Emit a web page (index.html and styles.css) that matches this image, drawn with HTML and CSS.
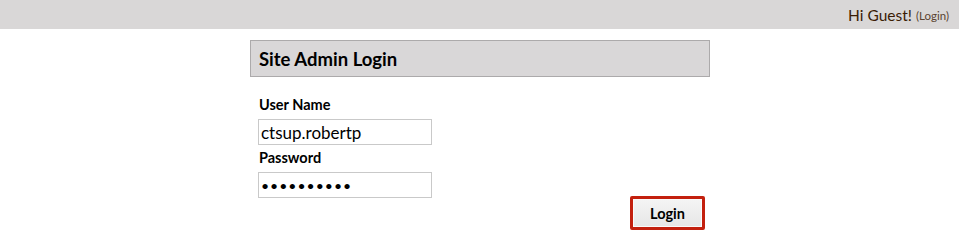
FILE: index.html
```html
<!DOCTYPE html>
<html>
<head>
<meta charset="utf-8">
<link rel="stylesheet" href="styles.css">
</head>
<body>
<div class="topbar">
  <span class="greet">Hi Guest!</span>
  <a class="login-link" href="#">(Login)</a>
</div>
<div class="panel">
  <div class="panel-head">Site Admin Login</div>
  <form class="form">
    <label class="label">User Name</label>
    <input class="field" type="text" value="ctsup.robertp">
    <label class="label">Password</label>
    <input class="field pw" type="password" value="abcdefghij">
    <div class="actions"><button class="btn" type="button">Login</button></div>
  </form>
</div>
</body>
</html>
```

FILE: styles.css
```css
html, body {
  margin: 0;
  padding: 0;
  background: #ffffff;
  font-family: Lato, "Open Sans", "Liberation Sans", sans-serif;
  color: #000;
}
.topbar {
  height: 29px;
  background: #d9d7d7;
  display: flex;
  justify-content: flex-end;
  align-items: center;
  gap: 4px;
  padding-right: 10px;
}
.greet {
  font-size: 15.5px;
  color: #3b1c05;
}
.login-link {
  font-size: 11.5px;
  color: #5a4330;
  text-decoration: none;
  margin-top: 2px;
}
.panel {
  width: 460px;
  margin: 11px 0 0 250px;
}
.panel-head {
  box-sizing: border-box;
  height: 37px;
  background: #d9d7d8;
  border: 1px solid #acaaab;
  font-weight: bold;
  font-size: 18.5px;
  padding: 0 8px;
  display: flex;
  align-items: center;
}
.form {
  display: flex;
  flex-direction: column;
  align-items: flex-start;
  padding: 19px 0 0 8px;
}
.label {
  font-size: 14.5px;
  font-weight: bold;
  line-height: 17px;
  margin-left: 1px;
  margin-bottom: 6px;
}
.field {
  box-sizing: border-box;
  width: 174px;
  height: 26px;
  border: 1px solid #c9c9c9;
  padding: 0 2px;
  font-family: Lato, "Open Sans", "Liberation Sans", sans-serif;
  font-size: 17px;
  color: #000;
  margin: 0 0 4px 0;
  outline: none;
}
.pw {
  font-size: 14px;
  letter-spacing: 1px;
}
.actions {
  align-self: stretch;
  display: flex;
  justify-content: flex-end;
  margin-top: -6px;
  padding-right: 5px;
}
.btn {
  box-sizing: border-box;
  width: 75px;
  height: 34px;
  border: 3px solid #c3200e;
  border-radius: 2px;
  background: linear-gradient(#f4f4f4, #e6e6e6);
  font-family: Lato, "Open Sans", "Liberation Sans", sans-serif;
  font-weight: bold;
  font-size: 14.5px;
  color: #000;
  box-shadow: inset 0 0 0 1px #fafafa;
}
```
